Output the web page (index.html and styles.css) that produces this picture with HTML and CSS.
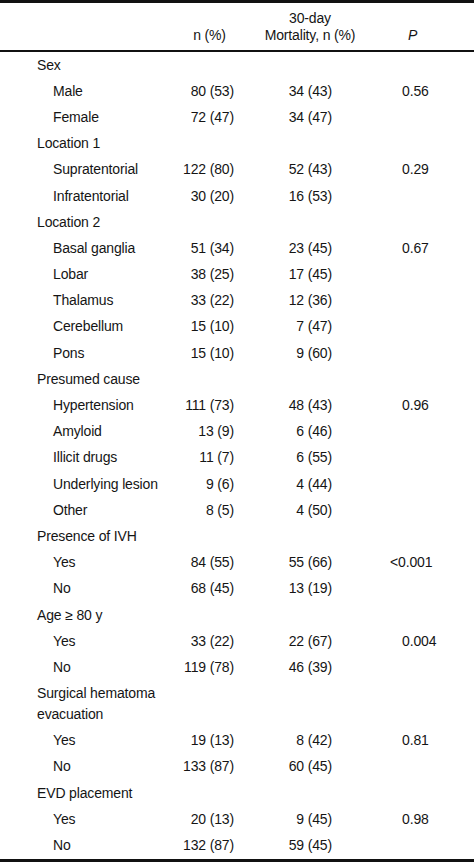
FILE: index.html
```html
<!DOCTYPE html>
<html lang="en">
<head>
<meta charset="utf-8">
<title>Table</title>
<link rel="stylesheet" href="styles.css">
</head>
<body>
<table class="tbl">
  <colgroup>
    <col class="c-label">
    <col class="c-n">
    <col class="c-mort">
    <col class="c-p">
  </colgroup>
  <thead>
    <tr>
      <th class="h-label"></th>
      <th class="h-n">n (%)</th>
      <th class="h-mort">30-day<br>Mortality, n (%)</th>
      <th class="h-p"><i>P</i></th>
    </tr>
  </thead>
  <tbody>
    <tr class="grp"><td class="lab">Sex</td><td></td><td></td><td></td></tr>
    <tr><td class="sub">Male</td><td class="n">80 (53)</td><td class="m">34 (43)</td><td class="p">0.56</td></tr>
    <tr><td class="sub">Female</td><td class="n">72 (47)</td><td class="m">34 (47)</td><td class="p"></td></tr>
    <tr class="grp"><td class="lab">Location 1</td><td></td><td></td><td></td></tr>
    <tr><td class="sub">Supratentorial</td><td class="n">122 (80)</td><td class="m">52 (43)</td><td class="p">0.29</td></tr>
    <tr><td class="sub">Infratentorial</td><td class="n">30 (20)</td><td class="m">16 (53)</td><td class="p"></td></tr>
    <tr class="grp"><td class="lab">Location 2</td><td></td><td></td><td></td></tr>
    <tr><td class="sub">Basal ganglia</td><td class="n">51 (34)</td><td class="m">23 (45)</td><td class="p">0.67</td></tr>
    <tr><td class="sub">Lobar</td><td class="n">38 (25)</td><td class="m">17 (45)</td><td class="p"></td></tr>
    <tr><td class="sub">Thalamus</td><td class="n">33 (22)</td><td class="m">12 (36)</td><td class="p"></td></tr>
    <tr><td class="sub">Cerebellum</td><td class="n">15 (10)</td><td class="m">7 (47)</td><td class="p"></td></tr>
    <tr><td class="sub">Pons</td><td class="n">15 (10)</td><td class="m">9 (60)</td><td class="p"></td></tr>
    <tr class="grp"><td class="lab">Presumed cause</td><td></td><td></td><td></td></tr>
    <tr><td class="sub">Hypertension</td><td class="n">111 (73)</td><td class="m">48 (43)</td><td class="p">0.96</td></tr>
    <tr><td class="sub">Amyloid</td><td class="n">13 (9)</td><td class="m">6 (46)</td><td class="p"></td></tr>
    <tr><td class="sub">Illicit drugs</td><td class="n">11 (7)</td><td class="m">6 (55)</td><td class="p"></td></tr>
    <tr><td class="sub">Underlying lesion</td><td class="n">9 (6)</td><td class="m">4 (44)</td><td class="p"></td></tr>
    <tr><td class="sub">Other</td><td class="n">8 (5)</td><td class="m">4 (50)</td><td class="p"></td></tr>
    <tr class="grp"><td class="lab">Presence of IVH</td><td></td><td></td><td></td></tr>
    <tr><td class="sub">Yes</td><td class="n">84 (55)</td><td class="m">55 (66)</td><td class="p lt">&lt;0.001</td></tr>
    <tr><td class="sub">No</td><td class="n">68 (45)</td><td class="m">13 (19)</td><td class="p"></td></tr>
    <tr class="grp"><td class="lab">Age &ge; 80 y</td><td></td><td></td><td></td></tr>
    <tr><td class="sub">Yes</td><td class="n">33 (22)</td><td class="m">22 (67)</td><td class="p">0.004</td></tr>
    <tr><td class="sub">No</td><td class="n">119 (78)</td><td class="m">46 (39)</td><td class="p"></td></tr>
    <tr class="grp"><td class="lab">Surgical hematoma evacuation</td><td></td><td></td><td></td></tr>
    <tr><td class="sub">Yes</td><td class="n">19 (13)</td><td class="m">8 (42)</td><td class="p">0.81</td></tr>
    <tr><td class="sub">No</td><td class="n">133 (87)</td><td class="m">60 (45)</td><td class="p"></td></tr>
    <tr class="grp"><td class="lab">EVD placement</td><td></td><td></td><td></td></tr>
    <tr><td class="sub">Yes</td><td class="n">20 (13)</td><td class="m">9 (45)</td><td class="p">0.98</td></tr>
    <tr><td class="sub">No</td><td class="n">132 (87)</td><td class="m">59 (45)</td><td class="p"></td></tr>
  </tbody>
</table>
</body>
</html>
```

FILE: styles.css
```css
html, body {
  margin: 0;
  padding: 0;
  background: #ffffff;
}

body {
  font-family: "Liberation Sans Narrow", "Arial Narrow", "Liberation Sans", Arial, sans-serif;
  font-size: 14px;
  letter-spacing: -0.15px;
  color: #151515;
}

.tbl {
  width: 474px;
  table-layout: fixed;
  border-collapse: collapse;
  border-bottom: 3px solid #111;
}

.c-label { width: 180px; }
.c-n { width: 54px; }
.c-mort { width: 152px; }
.c-p { width: 88px; }

.tbl thead tr {
  border-top: 3px solid #111;
  border-bottom: 2px solid #111;
}

.tbl th {
  font-weight: normal;
  line-height: 17.6px;
  padding: 6.9px 0 4.9px 0;
  vertical-align: bottom;
  white-space: nowrap;
}

.h-n {
  text-align: center;
  padding-left: 5px !important;
}

.h-mort {
  text-align: center;
}

.h-p {
  text-align: left;
  padding-left: 22px !important;
}

.tbl td {
  line-height: 21px;
  padding: 2.6px 0;
  vertical-align: top;
  white-space: nowrap;
}

.tbl td.lab {
  padding-left: 37px;
  white-space: normal;
}

.tbl td.sub {
  padding-left: 53px;
}

.tbl td.n {
  text-align: right;
}

.tbl td.m {
  text-align: right;
  padding-right: 54px;
}

.tbl td.p {
  text-align: left;
  padding-left: 16px;
}

.tbl td.lt {
  text-indent: -12px;
  word-spacing: 0;
}
```
